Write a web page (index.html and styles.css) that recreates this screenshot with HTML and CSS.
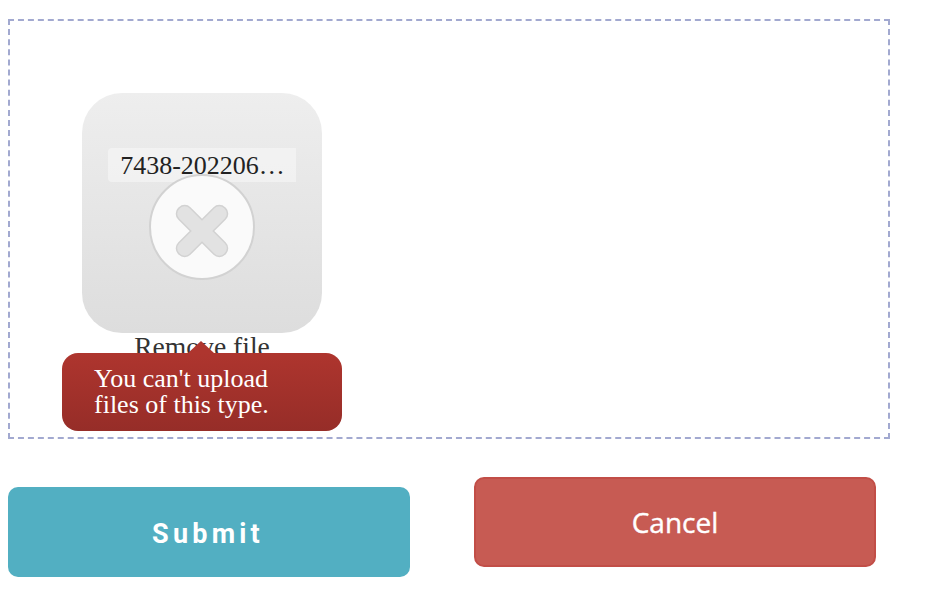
FILE: index.html
```html
<!DOCTYPE html>
<html lang="en">

<head>
    <meta charset="utf-8" />
    <title>Upload</title>
    <link rel="stylesheet" href="styles.css">
</head>

<body>
    <form class="uploadForm">
        <div class="dropzone">
            <div class="preview">
                <div class="thumb">
                    <span class="fileName">7438-202206…</span>
                    <span class="errorMark">
                        <svg width="60" height="60" viewBox="-30 -30 60 60" aria-hidden="true">
                            <path transform="rotate(45)" d="M-8,-25 a7.5,7.5 0 0 1 7.5,-7.5 h1 a7.5,7.5 0 0 1 7.5,7.5 V-8 H25 a7.5,7.5 0 0 1 7.5,7.5 v1 a7.5,7.5 0 0 1 -7.5,7.5 H8 V25 a7.5,7.5 0 0 1 -7.5,7.5 h-1 a7.5,7.5 0 0 1 -7.5,-7.5 V8 H-25 a7.5,7.5 0 0 1 -7.5,-7.5 v-1 a7.5,7.5 0 0 1 7.5,-7.5 H-8 Z" />
                        </svg>
                    </span>
                </div>
                <a href="#" class="removeLink">Remove file</a>
                <div class="errorTip">You can't upload files of this type.</div>
            </div>
        </div>

        <div class="actions">
            <button type="button" class="btn submitBtn">Submit</button>
            <button type="button" class="btn cancelBtn">Cancel</button>
        </div>
    </form>
</body>

</html>
```

FILE: styles.css
```css
body {
    margin: 19px 0 0 8px;
    background: #fff;
    font-family: "Liberation Serif", serif;
    color: #222;
}

.dropzone {
    box-sizing: border-box;
    width: 882px;
    height: 420px;
    padding: 72px;
    border: 2px dashed #a2a9d0;
}

.preview {
    position: relative;
    width: 240px;
}

.thumb {
    position: relative;
    width: 240px;
    height: 240px;
    border-radius: 40px;
    background: linear-gradient(to bottom, #eee, #ddd);
}

.fileName {
    position: absolute;
    left: 26px;
    top: 55px;
    box-sizing: border-box;
    width: 188px;
    height: 34px;
    padding: 1px 0 0 1px;
    font-size: 26px;
    line-height: 34px;
    text-align: center;
    white-space: nowrap;
    background: rgba(255, 255, 255, 0.4);
    border-radius: 4px 0 0 4px;
}

.errorMark {
    position: absolute;
    left: 67px;
    top: 81px;
    box-sizing: border-box;
    width: 106px;
    height: 106px;
    display: flex;
    align-items: center;
    justify-content: center;
    padding-top: 8px;
    border: 2px solid #d2d2d2;
    border-radius: 50%;
    background: #fafafa;
}

.errorMark path {
    fill: #e2e2e2;
    stroke: #d2d2d2;
    stroke-width: 1.5;
}

.removeLink {
    display: block;
    font-size: 27.6px;
    line-height: 28px;
    text-align: center;
    text-decoration: none;
    color: #333;
}

.errorTip {
    position: absolute;
    left: -20px;
    top: 260px;
    box-sizing: border-box;
    width: 280px;
    height: 78px;
    padding: 13px 64px 0 32px;
    border-radius: 16px;
    background: linear-gradient(to bottom, #ae352e, #962d28);
    color: #fff;
    font-size: 26px;
    line-height: 26px;
}

.errorTip::after {
    content: "";
    position: absolute;
    left: 126px;
    top: -12px;
    border-left: 13px solid transparent;
    border-right: 13px solid transparent;
    border-bottom: 12px solid #ae352e;
}

.actions {
    display: flex;
    align-items: flex-start;
    gap: 64px;
    margin-top: 38px;
}

.btn {
    box-sizing: border-box;
    width: 402px;
    height: 90px;
    border-radius: 10px;
    color: #fff;
    cursor: pointer;
}

.submitBtn {
    margin-top: 10px;
    padding: 3px 8px 0 6px;
    border: none;
    background: #52afc2;
    font-family: Roboto, sans-serif;
    font-weight: 700;
    font-size: 27px;
    letter-spacing: 4.2px;
}

.cancelBtn {
    border: 2px solid #c24e47;
    background: #c75b53;
    font-family: "Open Sans", sans-serif;
    font-size: 28px;
    -webkit-text-stroke: 0.4px #fff;
}
```
